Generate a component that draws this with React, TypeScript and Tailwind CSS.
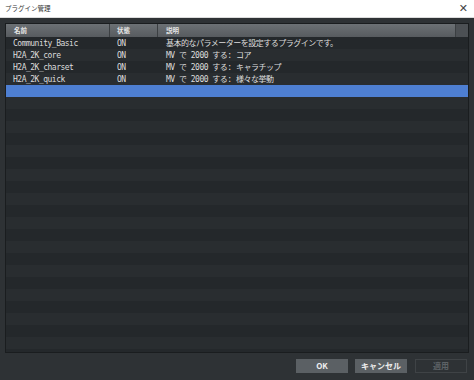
import React from 'react';

const plugins = [
  { name: 'Community_Basic', status: 'ON', desc: '基本的なパラメーターを設定するプラグインです。' },
  { name: 'H2A_2K_core', status: 'ON', desc: 'MV で 2000 する: コア' },
  { name: 'H2A_2K_charset', status: 'ON', desc: 'MV で 2000 する: キャラチップ' },
  { name: 'H2A_2K_quick', status: 'ON', desc: 'MV で 2000 する: 様々な挙動' },
];

const FONT = "font-['DejaVu_Sans_Mono','Noto_Sans_CJK_JP',monospace]";
const JP = "font-['Noto_Sans_CJK_JP',sans-serif]";

export default function App() {
  const rows = Array.from({ length: 27 }, (_, i) => i);

  return (
    <div className="w-[474px] h-[380px] flex flex-col overflow-hidden">
      {/* title bar */}
      <div className="h-[18px] bg-white flex items-center justify-between pl-[5px] pr-[6px] border-b border-[#dcdcdc]">
        <span className={`${JP} text-[6.5px] text-[#333]`}>プラグイン管理</span>
        <span className="text-[11px] leading-none text-[#444] font-['DejaVu_Sans',sans-serif]">✕</span>
      </div>

      <div className="flex-1 bg-[#2e3235] flex flex-col px-[5px] pt-[5px]">
        {/* table */}
        <div className="h-[330px] border border-[#1a1d1f] bg-[#24282b] overflow-hidden">
          <div className={`${JP} h-[13px] flex text-[6.5px] font-bold text-[#e6e6e6] bg-gradient-to-b from-[#6c7175] to-[#575b5f]`}>
            <div className="w-[104px] pl-[8px] flex items-center border-r border-[#3b3f42]">名前</div>
            <div className="w-[48px] pl-[7px] flex items-center border-r border-[#3b3f42]">状態</div>
            <div className="w-[298px] pl-[8px] flex items-center border-r border-[#3b3f42]">説明</div>
            <div className="flex-1 bg-[#4c5054]"></div>
          </div>

          {rows.map((i) => {
            const p = plugins[i];
            const selected = i === 4;
            const bg = selected ? 'bg-[#4e7fd2]' : i % 2 === 0 ? 'bg-[#24282b]' : 'bg-[#292d30]';
            return (
              <div
                key={i}
                className={`${FONT} ${bg} h-[12px] pt-[1px] whitespace-nowrap text-[8px] leading-[11px] tracking-[-0.5px] text-[#dcdcdc]`}
              >
                {p && (
                  <>
                    <span className="inline-block w-[104px] pl-[7px]">{p.name}</span>
                    <span className="inline-block w-[48px] pl-[7px]">{p.status}</span>
                    <span className="inline-block w-[298px] pl-[8px]">{p.desc}</span>
                  </>
                )}
              </div>
            );
          })}
        </div>

        {/* buttons */}
        <div className={`${JP} flex justify-end pt-[6px] pr-[2px] text-[8px]`}>
          <button className="w-[52px] h-[14px] bg-[#5b6064] text-[#eeeeee] font-bold flex items-center justify-center">
            OK
          </button>
          <button className="ml-[7px] w-[52px] h-[14px] bg-[#5b6064] text-[#eeeeee] font-bold flex items-center justify-center">
            キャンセル
          </button>
          <button className="ml-[8px] w-[52px] h-[14px] bg-[#2e3235] border border-[#3f4346] text-[#5d6266] font-bold flex items-center justify-center">
            適用
          </button>
        </div>
      </div>
    </div>
  );
}
